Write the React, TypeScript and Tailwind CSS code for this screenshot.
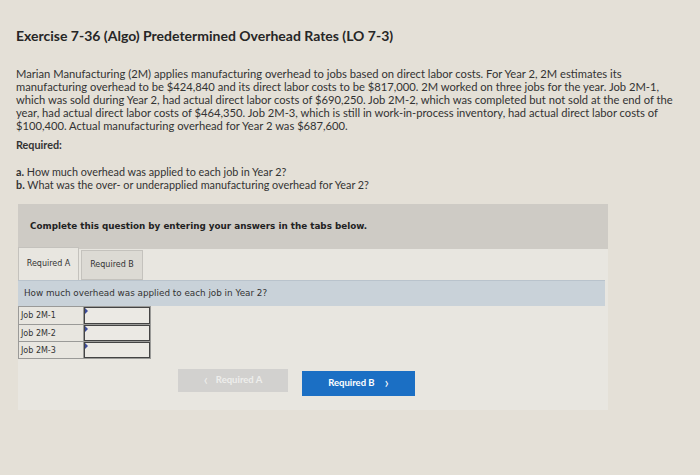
export default function App() {
  const rows = ["Job 2M-1", "Job 2M-2", "Job 2M-3"];
  return (
    <div className="w-[700px] h-[475px] overflow-hidden bg-[#e4e0d7] text-[#2a2a2a]" style={{ fontFamily: "Lato, 'Open Sans', sans-serif" }}>
      <div className="pl-[16px] pt-[26px]">
        <h1 className="text-[14px] leading-[20px] font-bold text-[#262626]">Exercise 7-36 (Algo) Predetermined Overhead Rates (LO 7-3)</h1>
        <p className="mt-[21px] text-[11.2px] leading-[13px] text-[#333] whitespace-nowrap">
          Marian Manufacturing (2M) applies manufacturing overhead to jobs based on direct labor costs. For Year 2, 2M estimates its<br />
          manufacturing overhead to be $424,840 and its direct labor costs to be $817,000. 2M worked on three jobs for the year. Job 2M-1,<br />
          which was sold during Year 2, had actual direct labor costs of $690,250. Job 2M-2, which was completed but not sold at the end of the<br />
          year, had actual direct labor costs of $464,350. Job 2M-3, which is still in work-in-process inventory, had actual direct labor costs of<br />
          $100,400. Actual manufacturing overhead for Year 2 was $687,600.
        </p>
        <p className="mt-[6px] text-[10.8px] leading-[13px] font-bold text-[#333]">Required:</p>
        <div className="mt-[14px] text-[10.8px] leading-[13px] text-[#333]">
          <p><span className="font-bold">a.</span> How much overhead was applied to each job in Year 2?</p>
          <p><span className="font-bold">b.</span> What was the over- or underapplied manufacturing overhead for Year 2?</p>
        </div>
      </div>

      <div className="ml-[18px] mt-[13px] w-[590px]" style={{ fontFamily: "'DejaVu Sans', Verdana, sans-serif" }}>
        <div className="h-[45px] bg-[#cecbc5] flex items-center pl-[12px]">
          <span className="text-[8.8px] font-bold text-[#222]">Complete this question by entering your answers in the tabs below.</span>
        </div>
        <div className="bg-[#e8e6e0] pb-[14px]">
          <div className="flex gap-[2px] h-[31px] items-end">
            <div className="w-[61px] h-[33px] -mt-[2px] border border-[#c4c2bd] border-b-0 bg-[#e8e6e0] flex items-center justify-center text-[8px] text-[#333]">Required A</div>
            <div className="w-[62px] h-[30px] border border-[#c4c2bd] bg-[#dcdad4] flex items-center justify-center text-[8px] text-[#333]">Required B</div>
          </div>
          <div className="h-[26px] bg-[#c9d2d9] border-t border-[#b9c3cc] pl-[6px] pt-[6px] text-[8.8px] text-[#333] w-[587px]">
            How much overhead was applied to each job in Year 2?
          </div>
          <div className="w-[133px] border border-[#9a9a98] bg-[#e8e6e0]">
            {rows.map((r, i) => (
              <div key={r} className={`flex h-[17px] ${i > 0 ? "border-t border-[#9a9a98]" : ""}`}>
                <div className="w-[65px] pl-[2px] text-[8px] leading-[17px] text-[#333] border-r border-[#9a9a98]">{r}</div>
                <div className="flex-1 border-[1.5px] border-[#444] relative bg-[#ebe9e4]">
                  <div className="absolute left-0 top-0 w-0 h-0 border-t-[3px] border-b-[3px] border-l-[3px] border-t-transparent border-b-transparent border-l-[#3b4a9a]" />
                </div>
              </div>
            ))}
          </div>
          <div className="flex gap-[14px] ml-[160px] mt-[10px]" style={{ fontFamily: "Lato, 'Open Sans', sans-serif" }}>
            <div className="w-[110px] h-[23px] bg-[#d2d1cf] flex items-center justify-center gap-[8px] text-[9.5px] font-bold text-[#eeeeec]">
              <span className="text-[15px] leading-none font-normal -mt-[2px]">&lsaquo;</span><span>Required A</span>
            </div>
            <div className="w-[113px] h-[25px] mt-[2px] bg-[#1b6fc4] flex items-center justify-center gap-[10px] text-[9.5px] font-bold text-white">
              <span>Required B</span><span className="text-[15px] leading-none font-normal -mt-[2px]">&rsaquo;</span>
            </div>
          </div>
        </div>
      </div>
    </div>
  );
}
